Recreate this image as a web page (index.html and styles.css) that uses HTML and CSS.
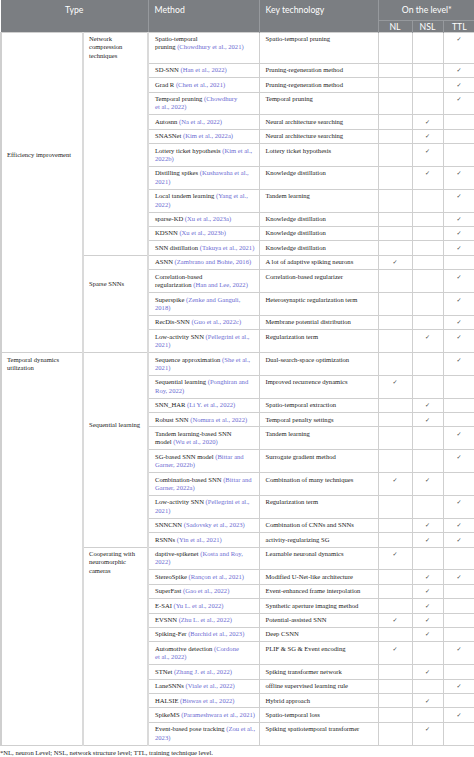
FILE: index.html
```html
<!DOCTYPE html>
<html>
<head>
<meta charset="utf-8">
<link rel="stylesheet" href="styles.css">
</head>
<body>
<table class="tbl">
  <colgroup>
    <col class="w-t1"><col class="w-t2"><col class="w-m"><col class="w-k"><col class="w-c1"><col class="w-c2"><col class="w-c3">
  </colgroup>
  <thead>
    <tr class="h1">
      <th class="h-type" colspan="2" rowspan="2">Type</th>
      <th class="h-left h-sep" rowspan="2">Method</th>
      <th class="h-left h-sep" rowspan="2">Key technology</th>
      <th class="h-level h-sep" colspan="3">On the level*</th>
    </tr>
    <tr class="h2">
      <th class="h-sub h-sep">NL</th>
      <th class="h-sub h-sep">NSL</th>
      <th class="h-sub h-sep">TTL</th>
    </tr>
  </thead>
  <tbody>
    <tr class="r3">
      <td class="t1 p-eff" rowspan="17">Efficiency improvement</td>
      <td class="t2" rowspan="12">Network<br>compression<br>techniques</td>
      <td class="m">Spatio-temporal<br>pruning <span class="c">(Chowdhury et al., 2021)</span></td>
      <td class="k">Spatio-temporal pruning</td>
      <td class="ck"></td><td class="ck"></td><td class="ck">✓</td>
    </tr>
    <tr>
      <td class="m">SD-SNN <span class="c">(Han et al., 2022)</span></td>
      <td class="k">Pruning-regeneration method</td>
      <td class="ck"></td><td class="ck"></td><td class="ck">✓</td>
    </tr>
    <tr>
      <td class="m">Grad R <span class="c">(Chen et al., 2021)</span></td>
      <td class="k">Pruning-regeneration method</td>
      <td class="ck"></td><td class="ck"></td><td class="ck">✓</td>
    </tr>
    <tr>
      <td class="m">Temporal pruning <span class="c">(Chowdhury<br>et al., 2022)</span></td>
      <td class="k">Temporal pruning</td>
      <td class="ck"></td><td class="ck"></td><td class="ck">✓</td>
    </tr>
    <tr>
      <td class="m">Autosnn <span class="c">(Na et al., 2022)</span></td>
      <td class="k">Neural architecture searching</td>
      <td class="ck"></td><td class="ck">✓</td><td class="ck"></td>
    </tr>
    <tr>
      <td class="m">SNASNet <span class="c">(Kim et al., 2022a)</span></td>
      <td class="k">Neural architecture searching</td>
      <td class="ck"></td><td class="ck">✓</td><td class="ck"></td>
    </tr>
    <tr>
      <td class="m">Lottery ticket hypothesis <span class="c">(Kim et al.,<br>2022b)</span></td>
      <td class="k">Lottery ticket hypothesis</td>
      <td class="ck"></td><td class="ck">✓</td><td class="ck"></td>
    </tr>
    <tr>
      <td class="m">Distilling spikes <span class="c">(Kushawaha et al.,<br>2021)</span></td>
      <td class="k">Knowledge distillation</td>
      <td class="ck"></td><td class="ck">✓</td><td class="ck">✓</td>
    </tr>
    <tr>
      <td class="m">Local tandem learning <span class="c">(Yang et al.,<br>2022)</span></td>
      <td class="k">Tandem learning</td>
      <td class="ck"></td><td class="ck"></td><td class="ck">✓</td>
    </tr>
    <tr>
      <td class="m">sparse-KD <span class="c">(Xu et al., 2023a)</span></td>
      <td class="k">Knowledge distillation</td>
      <td class="ck"></td><td class="ck"></td><td class="ck">✓</td>
    </tr>
    <tr>
      <td class="m">KDSNN <span class="c">(Xu et al., 2023b)</span></td>
      <td class="k">Knowledge distillation</td>
      <td class="ck"></td><td class="ck"></td><td class="ck">✓</td>
    </tr>
    <tr>
      <td class="m">SNN distillation <span class="c">(Takuya et al., 2021)</span></td>
      <td class="k">Knowledge distillation</td>
      <td class="ck"></td><td class="ck"></td><td class="ck">✓</td>
    </tr>
    <tr>
      <td class="t2 p-sparse" rowspan="5">Sparse SNNs</td>
      <td class="m">ASNN <span class="c">(Zambrano and Bohte, 2016)</span></td>
      <td class="k">A lot of adaptive spiking neurons</td>
      <td class="ck">✓</td><td class="ck"></td><td class="ck"></td>
    </tr>
    <tr>
      <td class="m">Correlation-based<br>regularization <span class="c">(Han and Lee, 2022)</span></td>
      <td class="k">Correlation-based regularizer</td>
      <td class="ck"></td><td class="ck"></td><td class="ck">✓</td>
    </tr>
    <tr>
      <td class="m">Superspike <span class="c">(Zenke and Ganguli,<br>2018)</span></td>
      <td class="k">Heterosynaptic regularization term</td>
      <td class="ck"></td><td class="ck"></td><td class="ck">✓</td>
    </tr>
    <tr>
      <td class="m">RecDis-SNN <span class="c">(Guo et al., 2022c)</span></td>
      <td class="k">Membrane potential distribution</td>
      <td class="ck"></td><td class="ck"></td><td class="ck">✓</td>
    </tr>
    <tr>
      <td class="m">Low-activity SNN <span class="c">(Pellegrini et al.,<br>2021)</span></td>
      <td class="k">Regularization term</td>
      <td class="ck"></td><td class="ck">✓</td><td class="ck">✓</td>
    </tr>
    <tr>
      <td class="t1" rowspan="22">Temporal dynamics<br>utilization</td>
      <td class="t2 p-seq" rowspan="10">Sequential learning</td>
      <td class="m">Sequence approximation <span class="c">(She et al.,<br>2021)</span></td>
      <td class="k">Dual-search-space optimization</td>
      <td class="ck"></td><td class="ck"></td><td class="ck">✓</td>
    </tr>
    <tr>
      <td class="m">Sequential learning <span class="c">(Ponghiran and<br>Roy, 2022)</span></td>
      <td class="k">Improved recurrence dynamics</td>
      <td class="ck">✓</td><td class="ck"></td><td class="ck"></td>
    </tr>
    <tr>
      <td class="m">SNN_HAR <span class="c">(Li Y. et al., 2022)</span></td>
      <td class="k">Spatio-temporal extraction</td>
      <td class="ck"></td><td class="ck">✓</td><td class="ck"></td>
    </tr>
    <tr>
      <td class="m">Robust SNN <span class="c">(Nomura et al., 2022)</span></td>
      <td class="k">Temporal penalty settings</td>
      <td class="ck"></td><td class="ck">✓</td><td class="ck"></td>
    </tr>
    <tr>
      <td class="m">Tandem learning-based SNN<br>model <span class="c">(Wu et al., 2020)</span></td>
      <td class="k">Tandem learning</td>
      <td class="ck"></td><td class="ck"></td><td class="ck">✓</td>
    </tr>
    <tr>
      <td class="m">SG-based SNN model <span class="c">(Bittar and<br>Garner, 2022b)</span></td>
      <td class="k">Surrogate gradient method</td>
      <td class="ck"></td><td class="ck"></td><td class="ck">✓</td>
    </tr>
    <tr>
      <td class="m">Combination-based SNN <span class="c">(Bittar and<br>Garner, 2022a)</span></td>
      <td class="k">Combination of many techniques</td>
      <td class="ck">✓</td><td class="ck">✓</td><td class="ck"></td>
    </tr>
    <tr>
      <td class="m">Low-activity SNN <span class="c">(Pellegrini et al.,<br>2021)</span></td>
      <td class="k">Regularization term</td>
      <td class="ck"></td><td class="ck"></td><td class="ck">✓</td>
    </tr>
    <tr>
      <td class="m">SNNCNN <span class="c">(Sadovsky et al., 2023)</span></td>
      <td class="k">Combination of CNNs and SNNs</td>
      <td class="ck"></td><td class="ck">✓</td><td class="ck">✓</td>
    </tr>
    <tr>
      <td class="m">RSNNs <span class="c">(Yin et al., 2021)</span></td>
      <td class="k">activity-regularizing SG</td>
      <td class="ck"></td><td class="ck">✓</td><td class="ck">✓</td>
    </tr>
    <tr>
      <td class="t2" rowspan="12">Cooperating with<br>neuromorphic<br>cameras</td>
      <td class="m">daptive-spikenet <span class="c">(Kosta and Roy,<br>2022)</span></td>
      <td class="k">Learnable neuronal dynamics</td>
      <td class="ck">✓</td><td class="ck"></td><td class="ck"></td>
    </tr>
    <tr>
      <td class="m">StereoSpike <span class="c">(Rançon et al., 2021)</span></td>
      <td class="k">Modified U-Net-like architecture</td>
      <td class="ck"></td><td class="ck">✓</td><td class="ck">✓</td>
    </tr>
    <tr>
      <td class="m">SuperFast <span class="c">(Gao et al., 2022)</span></td>
      <td class="k">Event-enhanced frame interpolation</td>
      <td class="ck"></td><td class="ck">✓</td><td class="ck"></td>
    </tr>
    <tr>
      <td class="m">E-SAI <span class="c">(Yu L. et al., 2022)</span></td>
      <td class="k">Synthetic aperture imaging method</td>
      <td class="ck"></td><td class="ck">✓</td><td class="ck"></td>
    </tr>
    <tr>
      <td class="m">EVSNN <span class="c">(Zhu L. et al., 2022)</span></td>
      <td class="k">Potential-assisted SNN</td>
      <td class="ck">✓</td><td class="ck">✓</td><td class="ck"></td>
    </tr>
    <tr>
      <td class="m">Spiking-Fer <span class="c">(Barchid et al., 2023)</span></td>
      <td class="k">Deep CSNN</td>
      <td class="ck"></td><td class="ck">✓</td><td class="ck"></td>
    </tr>
    <tr>
      <td class="m">Automotive detection <span class="c">(Cordone<br>et al., 2022)</span></td>
      <td class="k">PLIF &amp; SG &amp; Event encoding</td>
      <td class="ck">✓</td><td class="ck"></td><td class="ck">✓</td>
    </tr>
    <tr>
      <td class="m">STNet <span class="c">(Zhang J. et al., 2022)</span></td>
      <td class="k">Spiking transformer network</td>
      <td class="ck"></td><td class="ck">✓</td><td class="ck"></td>
    </tr>
    <tr>
      <td class="m">LaneSNNs <span class="c">(Viale et al., 2022)</span></td>
      <td class="k">offline supervised learning rule</td>
      <td class="ck"></td><td class="ck"></td><td class="ck">✓</td>
    </tr>
    <tr>
      <td class="m">HALSIE <span class="c">(Biswas et al., 2022)</span></td>
      <td class="k">Hybrid approach</td>
      <td class="ck"></td><td class="ck">✓</td><td class="ck"></td>
    </tr>
    <tr>
      <td class="m">SpikeMS <span class="c">(Parameshwara et al., 2021)</span></td>
      <td class="k">Spatio-temporal loss</td>
      <td class="ck"></td><td class="ck"></td><td class="ck">✓</td>
    </tr>
    <tr>
      <td class="m">Event-based pose tracking <span class="c">(Zou et al.,<br>2023)</span></td>
      <td class="k">Spiking spatiotemporal transformer</td>
      <td class="ck"></td><td class="ck">✓</td><td class="ck"></td>
    </tr>
  </tbody>
</table>
<p class="note">*NL, neuron Level; NSL, network structure level; TTL, training technique level.</p>
</body>
</html>
```

FILE: styles.css
```css
html, body {
  margin: 0;
  padding: 0;
  background: #ffffff;
}

body {
  font-family: "Liberation Serif", "Times New Roman", serif;
  color: #222222;
  width: 474px;
}

.tbl {
  width: 474px;
  border-collapse: collapse;
  table-layout: fixed;
}

.w-t1 { width: 82px; }
.w-t2 { width: 65px; }
.w-m { width: 111px; }
.w-k { width: 119px; }
.w-c1 { width: 34px; }
.w-c2 { width: 31px; }
.w-c3 { width: 32px; }

thead th {
  background: #7b7e82;
  color: #ffffff;
  font-family: Lato, "Open Sans", sans-serif;
  font-weight: normal;
  font-size: 8.7px;
  line-height: 10px;
  padding: 0;
  vertical-align: top;
  border: 0;
}

.h1 { height: 20px; }
.h2 { height: 12px; }

.h-type {
  text-align: center;
  padding-top: 5px;
}

.h-left {
  text-align: left;
  padding: 5px 6px 0 6px;
}

.h-sep {
  border-left: 1px solid #96999d;
}

.h-level {
  text-align: center;
  padding-top: 5px;
  border-bottom: 1px solid #96999d;
}

.h-sub {
  text-align: center;
  padding-top: 1px;
}

tbody td {
  font-size: 6.6px;
  line-height: 8.4px;
  padding: 2.5px 6px;
  vertical-align: top;
  border: 1px solid #cfcfcf;
}

.m, .k {
  white-space: nowrap;
}

tbody tr.r3 { height: 31.2px; }

.t1 {
  padding-left: 5px;
  border-left: 2px solid #cfcfcf;
  border-right: 2px solid #dadada;
}

.t2 {
  padding-left: 5px;
  border-right: 2px solid #dadada;
}

.p-eff { padding-top: 118px; }
.p-sparse { padding-top: 24px; }
.p-seq { padding-top: 68px; }

.c {
  color: #6c6cd2;
}

.ck {
  text-align: center;
  padding-left: 0;
  padding-right: 0;
  font-family: "DejaVu Sans", sans-serif;
  font-size: 6px;
  color: #444444;
}

.note {
  margin: 3px 0 0 0;
  font-size: 6.6px;
  line-height: 8px;
  color: #222222;
}
```
